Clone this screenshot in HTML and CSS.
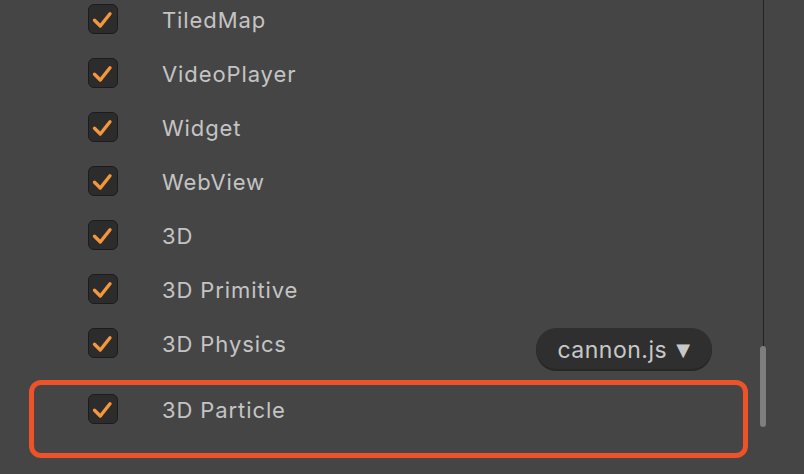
FILE: index.html
```html
<!DOCTYPE html>
<html lang="en">
<head>
    <meta charset="UTF-8">
    <meta name="viewport" content="width=device-width, initial-scale=1.0">
    <title>Modules</title>
    <link rel="stylesheet" href="styles.css">
</head>
<body>
    <div class="panel">
        <div class="module-list">
            <div class="row"><span class="check"></span><span class="label">TiledMap</span></div>
            <div class="row"><span class="check"></span><span class="label">VideoPlayer</span></div>
            <div class="row"><span class="check"></span><span class="label">Widget</span></div>
            <div class="row"><span class="check"></span><span class="label">WebView</span></div>
            <div class="row"><span class="check"></span><span class="label">3D</span></div>
            <div class="row"><span class="check"></span><span class="label">3D Primitive</span></div>
            <div class="row">
                <span class="check"></span><span class="label">3D Physics</span>
                <button class="select">cannon.js <span class="arrow">&#9660;</span></button>
            </div>
        </div>
        <div class="highlight">
            <div class="row"><span class="check"></span><span class="label">3D Particle</span></div>
        </div>
        <div class="scroll-track"></div>
        <div class="scroll-thumb"></div>
    </div>
    <script>
        // every checkbox gets the same tick
        document.querySelectorAll(".check").forEach(box => {
            box.innerHTML = '<svg width="28" height="28" viewBox="0 0 28 28"><path d="M5.5 15.3 L11.3 21 L21 8.8" fill="none" stroke="#f3963c" stroke-width="3.4" stroke-linecap="round" stroke-linejoin="round"/></svg>';
        });
    </script>
</body>
</html>
```
FILE: styles.css
```css
body {
    margin: 0;
    background: #454545;
    font-family: Inter, "Liberation Sans", Arial, sans-serif;
    overflow: hidden;
}

.panel {
    position: relative;
    display: flow-root;
    width: 804px;
    height: 474px;
}

.module-list {
    margin-top: -8px;
    padding: 0 92px 0 88px;
}

.row {
    display: flex;
    align-items: center;
    height: 54px;
}

.check {
    width: 30px;
    height: 30px;
    box-sizing: border-box;
    background: #2c2c2c;
    border: 1px solid #1c1c1c;
    border-radius: 6px;
    display: flex;
    flex-shrink: 0;
}

.label {
    margin-left: 44px;
    padding-top: 2px;
    color: #c4c4c4;
    font-size: 22px;
    letter-spacing: 0.9px;
}

.select {
    margin-left: auto;
    margin-top: 10px;
    width: 176px;
    height: 41px;
    border: none;
    border-radius: 21px;
    background: #2f2f2f;
    box-shadow: 0 2px 0 #262626;
    color: #c8c8c8;
    font-family: inherit;
    font-size: 23px;
    letter-spacing: 0.5px;
    padding: 3px 0 0;
}

.arrow {
    font-family: "DejaVu Sans", sans-serif;
    font-size: 18px;
    margin-left: 2px;
    vertical-align: 2px;
}

.highlight {
    margin: 10px 0 0 29px;
    width: 719px;
    box-sizing: border-box;
    border: 5px solid #ee5228;
    border-radius: 12px;
    padding: 0 0 20px 54px;
}

.highlight .row {
    height: 48px;
}

.scroll-track {
    position: absolute;
    left: 763px;
    top: 0;
    width: 1px;
    height: 346px;
    background: #222;
}

.scroll-thumb {
    position: absolute;
    left: 760px;
    top: 346px;
    width: 6px;
    height: 81px;
    border-radius: 3px;
    background: #7e7e7e;
}
```
